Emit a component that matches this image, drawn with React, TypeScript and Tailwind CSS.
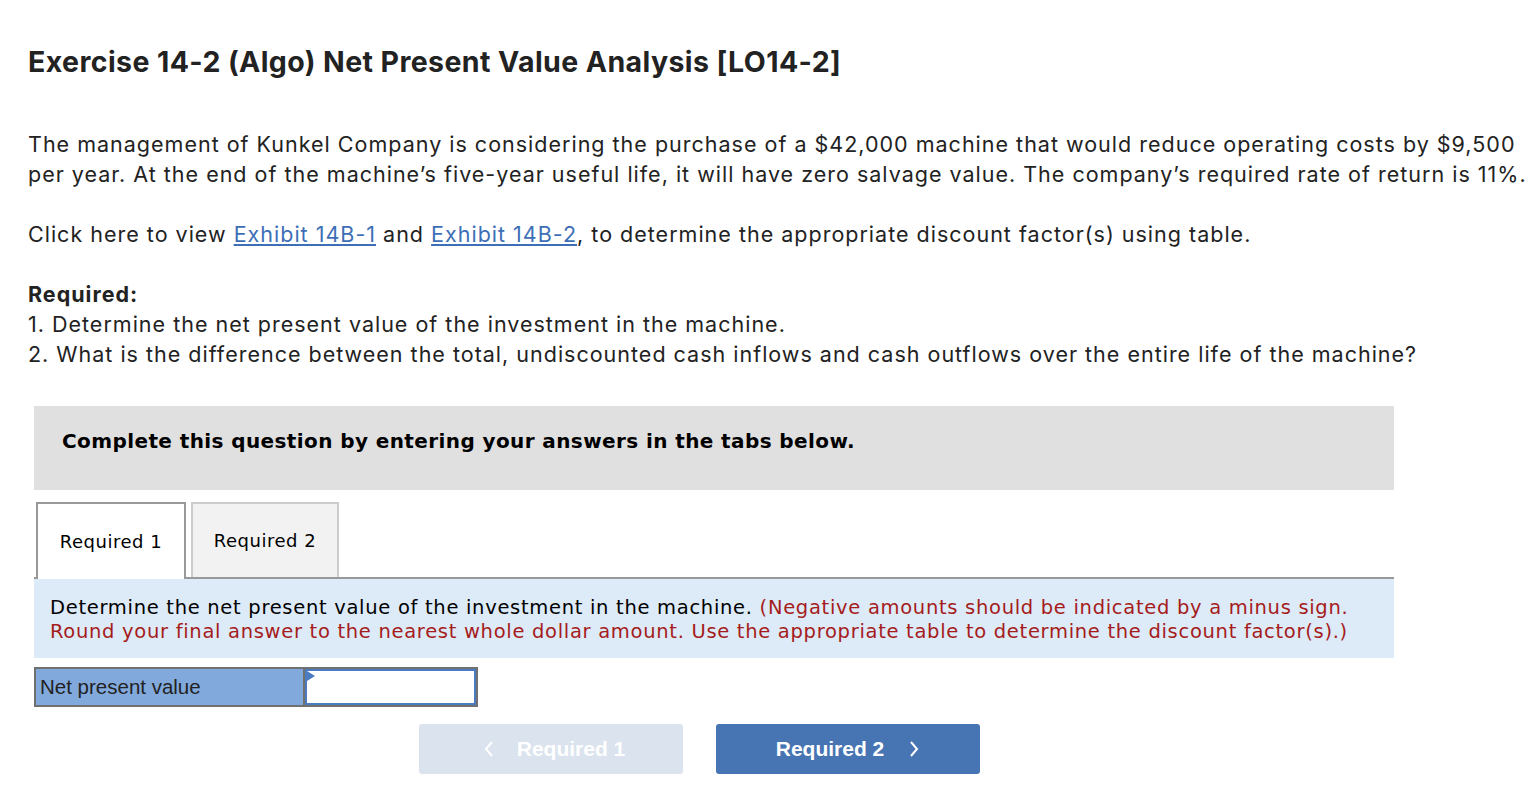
const sans = "font-['Inter',sans-serif]";
const verdana = "font-['DejaVu_Sans',Verdana,sans-serif]";
const arial = "font-['Liberation_Sans',Arial,sans-serif]";

const App = () => {
  return (
    <div className="min-h-screen bg-white pt-[44px] pl-[28px] pr-[10px]">
      <h1 className={`${sans} text-[28.5px] font-bold leading-[36px] tracking-[0.4px] text-[#222]`}>
        Exercise 14-2 (Algo) Net Present Value Analysis [LO14-2]
      </h1>

      <div className={`${sans} mt-[49px] whitespace-nowrap text-[21.5px] leading-[30px] tracking-[1px] text-[#222]`}>
        <p>
          The management of Kunkel Company is considering the purchase of a $42,000 machine that would reduce operating costs by $9,500
          <br />
          per year. At the end of the machine’s five-year useful life, it will have zero salvage value. The company’s required rate of return is 11%.
        </p>
        <p className="mt-[30px]">
          Click here to view <a className="text-[#3d6fb6] underline underline-offset-2">Exhibit 14B-1</a> and{" "}
          <a className="text-[#3d6fb6] underline underline-offset-2">Exhibit 14B-2</a>, to determine the appropriate discount factor(s) using table.
        </p>
        <p className="mt-[30px] font-bold">Required:</p>
        <p>1. Determine the net present value of the investment in the machine.</p>
        <p>2. What is the difference between the total, undiscounted cash inflows and cash outflows over the entire life of the machine?</p>
      </div>

      <div className="ml-[6px] mt-[37px] w-[1360px]">
        <div className={`${verdana} h-[84px] bg-[#e0e0e0] pl-[28px] pt-[23px] text-[20px] font-bold leading-[24px] tracking-[0.4px] text-black`}>
          Complete this question by entering your answers in the tabs below.
        </div>

        <div className={`${verdana} mt-[12px] flex items-end gap-[5px] border-b-2 border-[#999] pl-[2px] text-[18px] tracking-[0.5px] text-black`}>
          <div className="-mb-[2px] flex h-[77px] w-[150px] items-center justify-center border-2 border-b-0 border-[#999] bg-white">
            Required 1
          </div>
          <div className="flex h-[75px] w-[148px] items-center justify-center border-2 border-b-0 border-[#ccc] bg-[#f2f2f2]">
            Required 2
          </div>
        </div>

        <div className={`${verdana} whitespace-nowrap bg-[#ddeaf7] px-[16px] pt-[17px] pb-[14px] text-[19.5px] leading-[24px] tracking-[0.7px] text-black`}>
          Determine the net present value of the investment in the machine.{" "}
          <span className="text-[#a51c1c]">
            (Negative amounts should be indicated by a minus sign.
            <br />
            Round your final answer to the nearest whole dollar amount. Use the appropriate table to determine the discount factor(s).)
          </span>
        </div>

        <div className={`${arial} mt-[9px] flex h-[40px] w-[444px] border-2 border-[#707070]`}>
          <div className="flex w-[269px] items-center border-r-2 border-[#707070] bg-[#81a9dc] pl-[4px] text-[20.5px] text-[#222]">
            Net present value
          </div>
          <div className="relative flex-1 border-2 border-[#4a7bc0] bg-white">
            <svg className="absolute left-0 top-0" width="10" height="10" viewBox="0 0 10 10">
              <path d="M0 0 L8 5 L0 10 Z" fill="#4a7bc0" />
            </svg>
          </div>
        </div>

        <div className={`${arial} mt-[17px] flex justify-center gap-[33px] pr-[29px] text-[21px] font-bold text-white`}>
          <button className="flex h-[50px] w-[264px] items-center justify-center gap-[22px] rounded-[3px] bg-[#dae3ee] pl-[6px] text-white">
            <svg width="12" height="18" viewBox="0 0 12 18" fill="none">
              <path d="M9 2 L3 9 L9 16" stroke="white" strokeWidth="2" />
            </svg>
            Required 1
          </button>
          <button className="flex h-[50px] w-[264px] items-center justify-center gap-[24px] rounded-[3px] bg-[#4774b3]">
            Required 2
            <svg width="12" height="18" viewBox="0 0 12 18" fill="none">
              <path d="M3 2 L9 9 L3 16" stroke="white" strokeWidth="2" />
            </svg>
          </button>
        </div>
      </div>
    </div>
  );
};

export default App;
